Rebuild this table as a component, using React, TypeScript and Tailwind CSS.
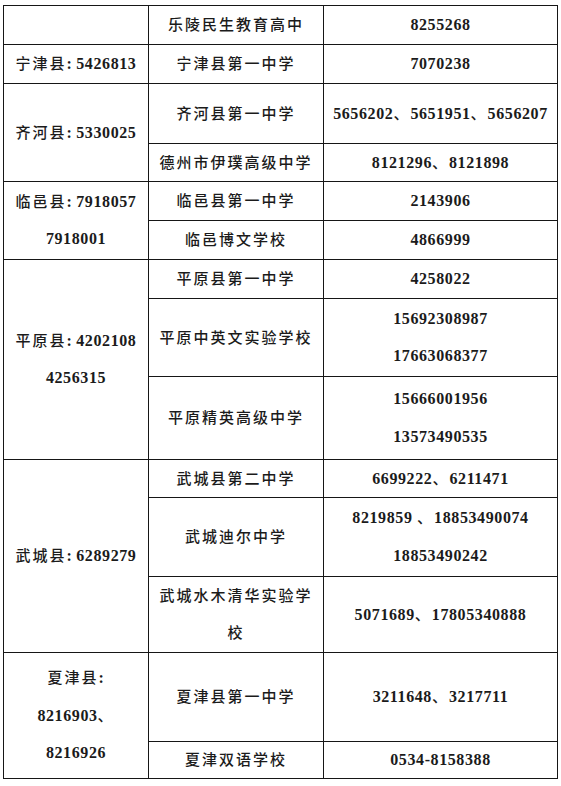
const FONT = "font-['Liberation_Serif','Noto_Sans_CJK_SC',serif]";

function Txt({ text }: { text: string }) {
  // split into CJK runs and latin/digit runs so each gets its own weight and spacing
  const parts = text.match(/[\u4e00-\u9fff\u3001]+|[^\u4e00-\u9fff\u3001]+/g) ?? [];
  return (
    <span className="whitespace-pre leading-[20px]">
      {parts.map((p, i) =>
        /[\u4e00-\u9fff\u3001]/.test(p) ? (
          <span key={i} className="text-[15px] font-medium tracking-[2px]">
            {p}
          </span>
        ) : (
          <span key={i} className="text-[16px] font-bold tracking-[0.6px]">
            {p}
          </span>
        )
      )}
    </span>
  );
}

function Cell({
  lines,
  rowSpan,
}: {
  lines: string[];
  rowSpan?: number;
}) {
  const lineH = lines.length > 1 ? "h-[37.5px]" : "h-[36px]";
  return (
    <td
      rowSpan={rowSpan}
      className="border border-[#161616] px-[6px] py-0 text-center align-middle"
    >
      {lines.map((l, i) => (
        <div key={i} className={`flex ${lineH} items-center justify-center`}>
          <Txt text={l} />
        </div>
      ))}
    </td>
  );
}

export default function App() {
  return (
    <div className={`min-h-[786px] bg-white pl-[3px] pt-[5px] text-[#1b1b1b] ${FONT}`}>
      <table className="w-[554px] table-fixed border-collapse">
        <colgroup>
          <col className="w-[145px]" />
          <col className="w-[175px]" />
          <col className="w-[234px]" />
        </colgroup>
        <tbody>
          <tr className="h-[39px]">
            <Cell lines={[]} />
            <Cell lines={["乐陵民生教育高中"]} />
            <Cell lines={["8255268"]} />
          </tr>
          <tr className="h-[39px]">
            <Cell lines={["宁津县:\u20095426813"]} />
            <Cell lines={["宁津县第一中学"]} />
            <Cell lines={["7070238"]} />
          </tr>
          <tr className="h-[60px]">
            <Cell lines={["齐河县:\u20095330025"]} rowSpan={2} />
            <Cell lines={["齐河县第一中学"]} />
            <Cell lines={["5656202、5651951、5656207"]} />
          </tr>
          <tr className="h-[38px]">
            <Cell lines={["德州市伊璞高级中学"]} />
            <Cell lines={["8121296、8121898"]} />
          </tr>
          <tr className="h-[39px]">
            <Cell lines={["临邑县:\u20097918057", "7918001"]} rowSpan={2} />
            <Cell lines={["临邑县第一中学"]} />
            <Cell lines={["2143906"]} />
          </tr>
          <tr className="h-[39px]">
            <Cell lines={["临邑博文学校"]} />
            <Cell lines={["4866999"]} />
          </tr>
          <tr className="h-[39px]">
            <Cell lines={["平原县:\u20094202108", "4256315"]} rowSpan={3} />
            <Cell lines={["平原县第一中学"]} />
            <Cell lines={["4258022"]} />
          </tr>
          <tr className="h-[78px]">
            <Cell lines={["平原中英文实验学校"]} />
            <Cell lines={["15692308987", "17663068377"]} />
          </tr>
          <tr className="h-[83px]">
            <Cell lines={["平原精英高级中学"]} />
            <Cell lines={["15666001956", "13573490535"]} />
          </tr>
          <tr className="h-[38px]">
            <Cell lines={["武城县:\u20096289279"]} rowSpan={3} />
            <Cell lines={["武城县第二中学"]} />
            <Cell lines={["6699222、6211471"]} />
          </tr>
          <tr className="h-[79px]">
            <Cell lines={["武城迪尔中学"]} />
            <Cell lines={["8219859 、18853490074", "18853490242"]} />
          </tr>
          <tr className="h-[76px]">
            <Cell lines={["武城水木清华实验学", "校"]} />
            <Cell lines={["5071689、17805340888"]} />
          </tr>
          <tr className="h-[89px]">
            <Cell lines={["夏津县:", "8216903、", "8216926"]} rowSpan={2} />
            <Cell lines={["夏津县第一中学"]} />
            <Cell lines={["3211648、3217711"]} />
          </tr>
          <tr className="h-[37px]">
            <Cell lines={["夏津双语学校"]} />
            <Cell lines={["0534-8158388"]} />
          </tr>
        </tbody>
      </table>
    </div>
  );
}
